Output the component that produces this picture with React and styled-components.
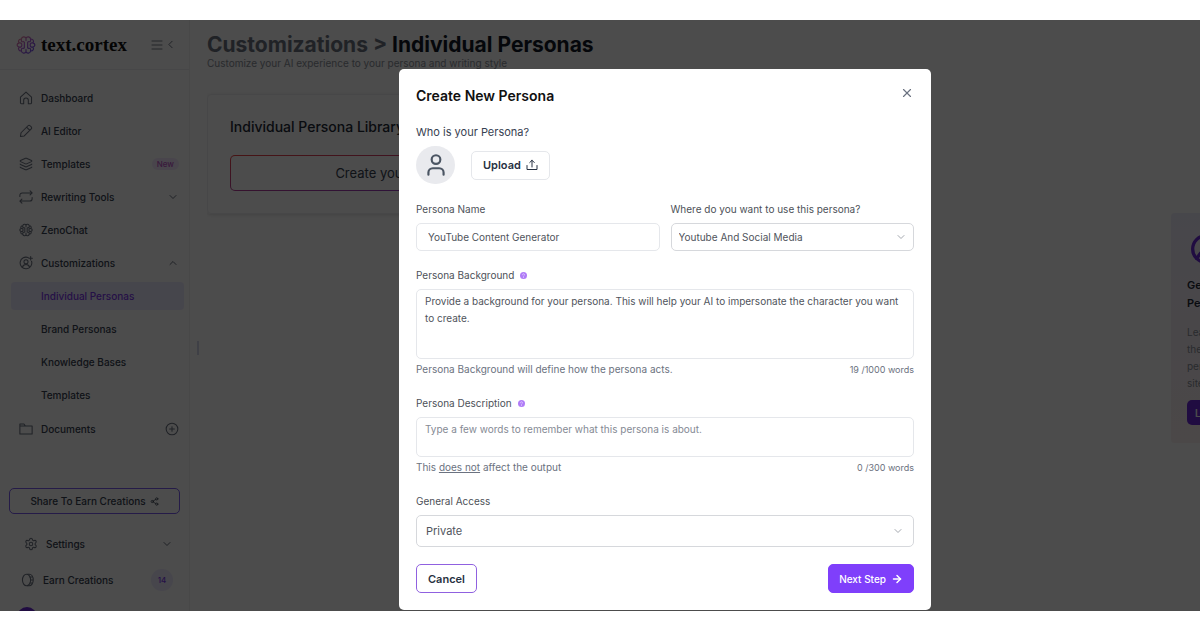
import React, { useState } from "react";
import styled, { createGlobalStyle, css } from "styled-components";
import { Layers, Settings, Share2, User, CirclePlus, X, ChevronDown, ChevronUp, ChevronLeft, ArrowRight } from "lucide-react";

const GlobalStyle = createGlobalStyle`
  * { box-sizing: border-box; }
  body {
    margin: 0;
    background: #fff;
    font-family: Inter, "Liberation Sans", sans-serif;
    font-size: 10px;
  }
  button, input, textarea, select { font: inherit; color: inherit; }
`;

const Page = styled.div`
  height: 100vh;
  padding: 20px 0 19px;
`;

const Frame = styled.div`
  position: relative;
  display: flex;
  height: 100%;
  overflow: hidden;
  background: #fdfdfd;
`;

/* Sidebar */
const Sidebar = styled.aside`
  flex: none;
  width: 190px;
  border-right: 1px solid #f0f0f2;
`;

const SidebarHeader = styled.header`
  display: flex;
  align-items: center;
  height: 50px;
  padding: 0 12px 0 16px;
  border-bottom: 1px solid #eeeef0;
`;

const Brand = styled.a`
  display: flex;
  flex: 1;
  align-items: center;
  gap: 5px;
  color: #111;
  font-family: "Liberation Serif", serif;
  font-size: 19px;
  font-weight: 700;
  line-height: 20px;
  text-decoration: none;
`;

const CollapseButton = styled.button`
  display: flex;
  align-items: center;
  gap: 1px;
  padding: 0;
  border: 0;
  background: none;
  color: #6b7280;
`;

const Nav = styled.nav`
  display: flex;
  flex-direction: column;
  gap: 5px;
  padding: 14px 5px 0 11px;
`;

const SubNav = styled.div`
  display: flex;
  flex-direction: column;
  gap: 5px;
  padding-bottom: 1px;
`;

const NavItem = styled.a`
  display: flex;
  align-items: center;
  gap: 8px;
  height: 28px;
  padding: 0 ${(p) => p.$end || 5}px 0 ${(p) => p.$start || 8}px;
  border-radius: 4px;
  color: ${(p) => (p.$active ? "#7c3aed" : "#374151")};
  background: ${(p) => (p.$active ? "#ece9fe" : "transparent")};
  font-weight: 500;
  text-decoration: none;

  svg { flex: none; color: #6b7280; }
`;

const NavLabel = styled.span`
  flex: 1;
`;

const NewBadge = styled.span`
  padding: 0 5px;
  border-radius: 6px;
  background: #f3e8ff;
  color: #c056c8;
  font-size: 8px;
  line-height: 12px;
`;

const CountBadge = styled.span`
  width: 22px;
  border-radius: 11px;
  background: #ede9fe;
  color: #7c3aed;
  font-size: 8px;
  line-height: 22px;
  text-align: center;
`;

const SidebarFooter = styled.div`
  display: flex;
  flex-direction: column;
  gap: 8px;
  padding: 45px 9px 0;
`;

const ShareButton = styled.button`
  display: flex;
  align-items: center;
  justify-content: center;
  gap: 4px;
  height: 26px;
  margin-bottom: 8px;
  padding: 0;
  border: 1px solid #7c5cf0;
  border-radius: 5px;
  background: none;
  color: #374151;
  font-weight: 500;
`;

const ProfileDot = styled.span`
  width: 20px;
  height: 20px;
  margin: 5px 0 0 8px;
  border-radius: 10px;
  background: #6d28d9;
`;

const Splitter = styled.div`
  flex: none;
  align-self: flex-start;
  width: 2px;
  height: 14px;
  margin: 321px 8px 0 7px;
  background: #d4d6ea;
`;

/* Page behind the dialog */
const Main = styled.main`
  display: flex;
  flex: 1;
  align-items: flex-start;
  justify-content: space-between;
  min-width: 0;
  overflow: hidden;
`;

const Content = styled.div`
  flex: none;
  padding-top: 13px;
`;

const Heading = styled.h1`
  margin: 0;
  color: #111827;
  font-size: 21px;
  font-weight: 700;
  line-height: 24px;

  span { color: #6b7280; }
`;

const Subtitle = styled.p`
  margin: 0;
  color: #8b909a;
  line-height: 12px;
`;

const LibraryCard = styled.section`
  width: 412px;
  height: 120px;
  margin-top: 25px;
  padding: 22px;
  border: 1px solid #efeff1;
  border-radius: 4px;
  box-shadow: 0 1px 3px rgba(0, 0, 0, 0.12);
`;

const LibraryTitle = styled.h2`
  margin: 0 0 18px;
  color: #1f2937;
  font-size: 14px;
  font-weight: 500;
  line-height: 20px;
`;

const CreateButton = styled.button`
  width: 100%;
  height: 36px;
  border: 1px solid transparent;
  border-radius: 5px;
  background: linear-gradient(#fdfdfd, #fdfdfd) padding-box, linear-gradient(to bottom right, #ef4444, #7c3aed) border-box;
  color: #374151;
  font-size: 13px;
`;

const PromoCard = styled.aside`
  flex: none;
  width: 180px;
  height: 230px;
  margin: 193px -151px 0 0;
  padding: 20px 16px;
  border-radius: 4px;
  background: linear-gradient(#efedfb, #fbf0f0);
  color: #8b909a;

  svg { display: block; margin-left: 3px; color: #6d28d9; }
`;

const PromoTitle = styled.h3`
  margin: 11px 0 12px;
  color: #1f2937;
  font-size: 11px;
  font-weight: 600;
  line-height: 18px;
`;

const PromoText = styled.p`
  margin: 0 0 8px;
  font-size: 10px;
  line-height: 17px;
`;

const PromoButton = styled.button`
  width: 90px;
  height: 25px;
  padding: 0 8px;
  border: 0;
  border-radius: 5px;
  background: #6d28d9;
  color: #fff;
  font-weight: 600;
  text-align: left;
`;

/* Dialog */
const Overlay = styled.div`
  position: absolute;
  inset: 0;
  display: flex;
  align-items: flex-start;
  justify-content: center;
  padding: 49px 0 0 130px;
  background: rgba(0, 0, 0, 0.7);
`;

const Dialog = styled.form`
  width: 532px;
  padding: 17px;
  border-radius: 5px;
  background: #fff;
  color: #4d5158;
`;

const DialogHeader = styled.header`
  display: flex;
  align-items: center;
  justify-content: space-between;
  margin-bottom: 18px;
`;

const DialogTitle = styled.h2`
  margin: 0;
  color: #111;
  font-size: 14px;
  font-weight: 600;
  line-height: 20px;
`;

const CloseButton = styled.button`
  display: flex;
  padding: 0 0 6px;
  border: 0;
  background: none;
  color: #6b7280;
`;

const Question = styled.p`
  margin: 0 0 6px;
  color: #374151;
  font-size: 11px;
  line-height: 16px;
`;

const AvatarRow = styled.div`
  display: flex;
  align-items: center;
  gap: 16px;
  margin-bottom: 18px;
`;

const Avatar = styled.span`
  display: grid;
  place-items: center;
  width: 39px;
  height: 38px;
  border-radius: 20px;
  background: #e9eaee;
  color: #4b5563;
`;

const Button = styled.button`
  display: flex;
  align-items: center;
  justify-content: center;
  gap: 5px;
  height: 29px;
  padding: 0 11px;
  border: 1px solid #e5e7eb;
  border-radius: 5px;
  background: #fff;
  color: #273142;
  font-size: 11px;
  font-weight: 600;

  ${(p) => p.$kind === "outline" && css`border-color: #9061e0;`}
  ${(p) => p.$kind === "primary" && css`
    padding: 0 10px;
    border-color: #7f3ffb;
    background: #7f3ffb;
    color: #fff;
    font-size: 10px;
    font-weight: 500;
  `}
`;

const FieldRow = styled.div`
  display: grid;
  grid-template-columns: 1fr 1fr;
  gap: 11px;
  margin-bottom: 17px;
`;

const Field = styled.div`
  display: flex;
  flex-direction: column;
  margin-bottom: ${(p) => p.$gap || 0}px;
`;

const Label = styled.label`
  display: flex;
  align-items: center;
  gap: 6px;
  margin-bottom: 7px;
  line-height: 14px;
`;

const control = css`
  width: 100%;
  border: 1px solid #e5e7eb;
  border-radius: 5px;
  background: #fff;
  color: #50545c;
  outline: none;
`;

const TextInput = styled.input`
  ${control}
  height: 28px;
  padding: 0 11px;
`;

const SelectWrap = styled.div`
  display: grid;
  align-items: center;

  > * { grid-area: 1 / 1; }
  svg { justify-self: end; margin-right: ${(p) => (p.$large ? 10 : 7)}px; color: #a4a8af; pointer-events: none; }
`;

const Select = styled.select`
  ${control}
  appearance: none;
  height: ${(p) => (p.$large ? 32 : 28)}px;
  padding: 0 ${(p) => (p.$large ? 9 : 7)}px;
  border-color: #d6d8dc;
  font-size: ${(p) => (p.$large ? 11 : 10)}px;
`;

const TextArea = styled.textarea`
  ${control}
  display: block;
  height: ${(p) => p.$height}px;
  padding: 3px 8px;
  line-height: 17px;
  resize: none;
  overflow: hidden;

  &::placeholder { color: #858a94; opacity: 1; }
`;

const HelperRow = styled.div`
  display: flex;
  justify-content: space-between;
  margin-top: 3px;
  color: #6b7280;
  line-height: 14px;
`;

const WordCount = styled.span`
  padding-top: 1px;
  font-size: 9px;
`;

const Actions = styled.footer`
  display: flex;
  justify-content: space-between;
`;

const Stroke = ({ size = 14, width = 1.5, children }) => (
  <svg width={size} height={size} viewBox="0 0 24 24" fill="none" stroke="currentColor" strokeWidth={width} strokeLinecap="round" strokeLinejoin="round" aria-hidden="true">
    {children}
  </svg>
);

const HomeIcon = () => (
  <Stroke width={1.8}>
    <path d="M2.500 10.500 12 2l9.500 8.500V20a2 2 0 0 1-2 2H16v-6a4 4 0 0 0-8 0v6H4.500a2 2 0 0 1-2-2Z" />
  </Stroke>
);

const PencilIcon = () => (
  <Stroke width={1.8}>
    <path d="M2.500 21.500 3.500 15 15.500 3a2.500 2.500 0 0 1 3.500 0l2 2a2.500 2.500 0 0 1 0 3.500L9 20.500ZM13 5.500l5.500 5.500" />
  </Stroke>
);

const FolderIcon = () => (
  <Stroke width={1.8}>
    <path d="M1.500 20.500v-17h7L11 7h11.500v13.500ZM1.500 7H11" />
  </Stroke>
);

const RepeatIcon = () => (
  <Stroke width={1.8}>
    <path d="M1.500 11V9a4 4 0 0 1 4-4h17M19 1.500 22.500 5 19 8.500M22.500 13v2a4 4 0 0 1-4 4h-17M5 15.500 1.500 19 5 22.500" />
  </Stroke>
);

const PersonaIcon = () => (
  <Stroke width={1.8}>
    <path d="M16 2.800A10 10 0 1 0 21.500 9M20 1v6M17 4h6" />
    <circle cx="12" cy="10" r="3.500" />
    <path d="M5.800 19.500c.8-3.500 3-5 6.200-5s5.400 1.500 6.200 5" />
  </Stroke>
);

const CoinIcon = () => (
  <Stroke width={1.8}>
    <ellipse cx="9.500" cy="12" rx="7" ry="10" />
    <path d="M11 2h3c4 0 7 4.500 7 10s-3 10-7 10h-3M15.500 7h4M16.500 12H21M15.500 17h4" />
  </Stroke>
);

const UploadIcon = () => (
  <Stroke size={12} width={2}>
    <path d="M2 13v8h20v-8M12 16V2.500M7.500 7 12 2.500 16.500 7" />
  </Stroke>
);

const Rosette = ({ size, stroke, width }) => (
  <svg width={size} height={size} viewBox="0 0 24 24" fill="none" stroke={stroke} strokeWidth={width} strokeLinecap="round" strokeLinejoin="round" aria-hidden="true">
    <defs>
      <linearGradient id="rosette" x1="0" y1="0" x2="1" y2="1">
        <stop offset="0" stopColor="#f58a8a" />
        <stop offset="0.450" stopColor="#b45ad8" />
        <stop offset="1" stopColor="#5a45f0" />
      </linearGradient>
    </defs>
    <path d="M12 3.800C13 1.500 17 1.500 17.500 4.800 20.500 4.500 22 7.500 20.200 9.500 23.500 10.500 23.500 13.500 20.200 14.500 22 16.500 20.500 19.500 17.500 19.200 17 22.500 13 22.500 12 20.200 11 22.500 7 22.500 6.500 19.200 3.500 19.500 2 16.500 3.800 14.500.500 13.500.500 10.500 3.800 9.500 2 7.500 3.500 4.500 6.500 4.800 7 1.500 11 1.500 12 3.800ZM12 3.800V6.500M12 17.500v2.700M6.500 4.800C6 7.500 7 8.500 9 8M17.500 4.800C18 7.500 17 8.500 15 8M6.500 19.200C6 16.500 7 15.500 9 16M17.500 19.200C18 16.500 17 15.500 15 16M3.800 9.500C6 9 7 10 7 12S6 15 3.800 14.500M20.200 9.500C18 9 17 10 17 12S18 15 20.200 14.500M10 8.500v7M14 8.500v7" />
  </svg>
);

const HelpDot = () => (
  <svg width="7" height="7" viewBox="0 0 14 14" role="img" aria-label="Help">
    <circle cx="7" cy="7" r="7" fill="#b07cf7" />
    <path d="M5 5.500a2 2 0 1 1 2.800 1.900c-.6.300-.8.600-.8 1.200M7 10.800v.2" fill="none" stroke="#e9dcff" strokeWidth="1.300" strokeLinecap="round" />
  </svg>
);

export default function App() {
  const [name, setName] = useState("YouTube Content Generator");
  const [background, setBackground] = useState(
    "Provide a background for your persona. This will help your AI to impersonate the character you want to create."
  );
  const [description, setDescription] = useState("");

  return (
    <Page>
      <GlobalStyle />
      <Frame>
        <Sidebar>
          <SidebarHeader>
            <Brand href="#home">
              <Rosette size={20} stroke="url(#rosette)" width={1.4} />
              text.cortex
            </Brand>
            <CollapseButton aria-label="Collapse sidebar">
              <Stroke size={12} width={1.8}><path d="M2 4h20M2 12h20M2 20h20" /></Stroke>
              <ChevronLeft size={13} strokeWidth={1.8} />
            </CollapseButton>
          </SidebarHeader>
          <Nav>
            <NavItem href="#dashboard"><HomeIcon /><NavLabel>Dashboard</NavLabel></NavItem>
            <NavItem href="#editor"><PencilIcon /><NavLabel>AI Editor</NavLabel></NavItem>
            <NavItem href="#templates"><Layers size={14} strokeWidth={1.8} /><NavLabel>Templates</NavLabel><NewBadge>New</NewBadge></NavItem>
            <NavItem href="#rewriting"><RepeatIcon /><NavLabel>Rewriting Tools</NavLabel><ChevronDown size={12} /></NavItem>
            <NavItem href="#zenochat"><Rosette size={14} stroke="currentColor" width={1.8} /><NavLabel>ZenoChat</NavLabel></NavItem>
            <NavItem href="#customizations"><PersonaIcon /><NavLabel>Customizations</NavLabel><ChevronUp size={12} /></NavItem>
            <SubNav>
              <NavItem href="#individual" $start={30} $active>Individual Personas</NavItem>
              <NavItem href="#brand" $start={30}>Brand Personas</NavItem>
              <NavItem href="#knowledge" $start={30}>Knowledge Bases</NavItem>
              <NavItem href="#persona-templates" $start={30}>Templates</NavItem>
            </SubNav>
            <NavItem href="#documents"><FolderIcon /><NavLabel>Documents</NavLabel><CirclePlus size={14} strokeWidth={1.8} /></NavItem>
          </Nav>
          <SidebarFooter>
            <ShareButton>Share To Earn Creations <Share2 size={9} /></ShareButton>
            <NavItem href="#settings" $start={15} $end={7}><Settings size={14} strokeWidth={1.8} /><NavLabel>Settings</NavLabel><ChevronDown size={12} /></NavItem>
            <NavItem href="#earn" $start={12} $end={7}><CoinIcon /><NavLabel>Earn Creations</NavLabel><CountBadge>14</CountBadge></NavItem>
            <ProfileDot />
          </SidebarFooter>
        </Sidebar>
        <Splitter />
        <Main>
          <Content>
            <Heading><span>Customizations &gt;</span> Individual Personas</Heading>
            <Subtitle>Customize your AI experience to your persona and writing style</Subtitle>
            <LibraryCard>
              <LibraryTitle>Individual Persona Library</LibraryTitle>
              <CreateButton>Create your own persona</CreateButton>
            </LibraryCard>
          </Content>
          <PromoCard>
            <Stroke size={32} width={2.5}><circle cx="12" cy="12" r="10" /><path d="M5 19l3-4h8l3 4" /></Stroke>
            <PromoTitle>Get<br />Personas</PromoTitle>
            <PromoText>Learn<br />the<br />persona<br />site</PromoText>
            <PromoButton>Learn</PromoButton>
          </PromoCard>
        </Main>

        <Overlay>
          <Dialog role="dialog" aria-labelledby="dialog-title" onSubmit={(e) => e.preventDefault()}>
            <DialogHeader>
              <DialogTitle id="dialog-title">Create New Persona</DialogTitle>
              <CloseButton type="button" aria-label="Close"><X size={14} strokeWidth={2} /></CloseButton>
            </DialogHeader>
            <Question>Who is your Persona?</Question>
            <AvatarRow>
              <Avatar><User size={26} strokeWidth={2} /></Avatar>
              <Button type="button">Upload <UploadIcon /></Button>
            </AvatarRow>
            <FieldRow>
              <Field>
                <Label htmlFor="name">Persona Name</Label>
                <TextInput id="name" value={name} onChange={(e) => setName(e.target.value)} />
              </Field>
              <Field>
                <Label htmlFor="usage">Where do you want to use this persona?</Label>
                <SelectWrap>
                  <Select id="usage"><option>Youtube And Social Media</option></Select>
                  <ChevronDown size={12} />
                </SelectWrap>
              </Field>
            </FieldRow>
            <Field $gap={19}>
              <Label htmlFor="background">Persona Background <HelpDot /></Label>
              <TextArea id="background" $height={70} value={background} onChange={(e) => setBackground(e.target.value)} />
              <HelperRow><span>Persona Background will define how the persona acts.</span><WordCount>19 /1000 words</WordCount></HelperRow>
            </Field>
            <Field $gap={19}>
              <Label htmlFor="description">Persona Description <HelpDot /></Label>
              <TextArea id="description" $height={40} value={description} placeholder="Type a few words to remember what this persona is about." onChange={(e) => setDescription(e.target.value)} />
              <HelperRow><span>This <u>does not</u> affect the output</span><WordCount>0 /300 words</WordCount></HelperRow>
            </Field>
            <Field $gap={17}>
              <Label htmlFor="access">General Access</Label>
              <SelectWrap $large>
                <Select id="access" $large><option>Private</option></Select>
                <ChevronDown size={12} />
              </SelectWrap>
            </Field>
            <Actions>
              <Button type="button" $kind="outline">Cancel</Button>
              <Button type="submit" $kind="primary">Next Step <ArrowRight size={12} strokeWidth={3} /></Button>
            </Actions>
          </Dialog>
        </Overlay>
      </Frame>
    </Page>
  );
}
